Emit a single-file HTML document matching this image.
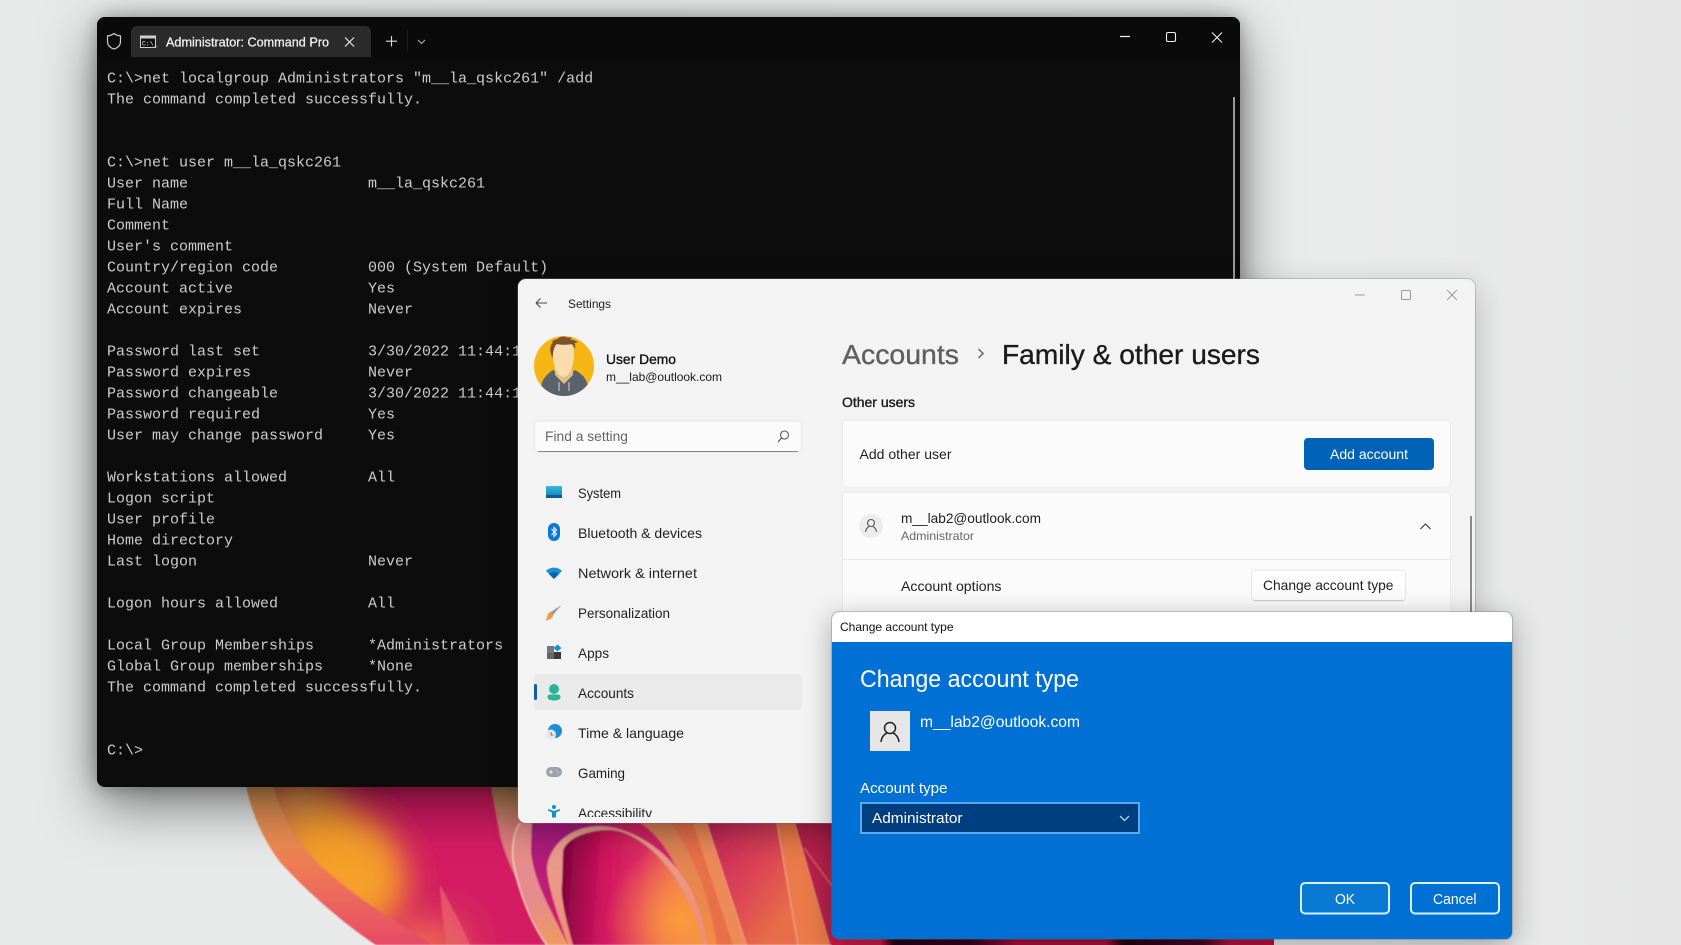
<!DOCTYPE html>
<html lang="en"><head><meta charset="utf-8"><title>Change account type</title>
<style>
html,body{margin:0;padding:0;width:1681px;height:945px;overflow:hidden;background:#e7e8e8}
.win{position:absolute;overflow:hidden}
.win>svg,#wall{position:absolute;display:block}
text{font-family:"Liberation Sans",Arial,sans-serif;white-space:pre}
.mono text,text.m{font-family:"Liberation Mono",monospace;font-size:15px;fill:#cccccc}
.sb{stroke-width:.35px}
</style></head><body>

<!-- desktop wallpaper -->
<svg id="wall" width="1681" height="945" viewBox="0 0 1681 945" style="left:0;top:0">
<defs>
<linearGradient id="bg" x1="0" y1="0" x2="1" y2="0"><stop offset="0" stop-color="#e8e9e9"/><stop offset=".8" stop-color="#eaebeb"/><stop offset="1" stop-color="#e6e6e6"/></linearGradient>
<filter id="soft" x="-5%" y="-5%" width="110%" height="110%"><feGaussianBlur stdDeviation=".7"/></filter>
<filter id="bl" x="-60%" y="-60%" width="220%" height="220%"><feGaussianBlur stdDeviation="18"/></filter>
<clipPath id="regB"><path d="M272 780 C280 815 302 852 330 874 C362 902 405 927 432 945 L560 945 L560 780Z"/></clipPath>
<linearGradient id="edge" x1="0" y1="0" x2="0" y2="1"><stop offset="0" stop-color="#d89a55"/><stop offset=".4" stop-color="#f08850"/><stop offset="1" stop-color="#e84a66"/></linearGradient>
<linearGradient id="band" x1="0" y1="0" x2="0" y2="1"><stop offset="0" stop-color="#b08a4e"/><stop offset=".35" stop-color="#e07a80"/><stop offset="1" stop-color="#e88a80"/></linearGradient>
<linearGradient id="band2" x1="0" y1="0" x2="0" y2="1"><stop offset="0" stop-color="#e89088"/><stop offset=".6" stop-color="#e58a90"/><stop offset="1" stop-color="#ee9a60"/></linearGradient>
<linearGradient id="mag" gradientUnits="userSpaceOnUse" x1="535" y1="830" x2="560" y2="940"><stop offset="0" stop-color="#a81a80"/><stop offset="1" stop-color="#d42068"/></linearGradient>
<linearGradient id="fold" gradientUnits="userSpaceOnUse" x1="563" y1="880" x2="703" y2="890"><stop offset="0" stop-color="#850340"/><stop offset=".3" stop-color="#d2155f"/><stop offset=".55" stop-color="#de2f64"/><stop offset=".8" stop-color="#ea6a58"/><stop offset="1" stop-color="#f08a50"/></linearGradient>
<radialGradient id="foldg" gradientUnits="userSpaceOnUse" cx="680" cy="920" r="75"><stop offset="0" stop-color="#fb9a3c" stop-opacity="1"/><stop offset="1" stop-color="#fb9a3c" stop-opacity="0"/></radialGradient>
<linearGradient id="ring" gradientUnits="userSpaceOnUse" x1="550" y1="830" x2="560" y2="945"><stop offset="0" stop-color="#e8a090"/><stop offset="1" stop-color="#ed8e7a"/></linearGradient>
<linearGradient id="outer" gradientUnits="userSpaceOnUse" x1="640" y1="823" x2="700" y2="945"><stop offset="0" stop-color="#d8805a"/><stop offset="1" stop-color="#f48a44"/></linearGradient>
<linearGradient id="cr" gradientUnits="userSpaceOnUse" x1="707" y1="830" x2="800" y2="900"><stop offset="0" stop-color="#c4265c"/><stop offset=".55" stop-color="#dc4455"/><stop offset="1" stop-color="#e86e48"/></linearGradient>
<linearGradient id="bot" x1="0" y1="0" x2="1" y2="0"><stop offset="0" stop-color="#c81c44"/><stop offset=".11" stop-color="#c81c44"/><stop offset=".14" stop-color="#260018"/><stop offset=".32" stop-color="#3a0420"/><stop offset=".42" stop-color="#a8103e"/><stop offset=".62" stop-color="#a8103e"/><stop offset=".66" stop-color="#24000f"/><stop offset=".84" stop-color="#4a0824"/><stop offset=".9" stop-color="#b5123f"/><stop offset="1" stop-color="#b5123f"/></linearGradient>
</defs>
<rect width="1681" height="945" fill="url(#bg)"/>
<g filter="url(#soft)">
<path d="M245 780 C250 810 262 838 280 862 C305 890 345 925 376 945 L560 945 L560 780Z" fill="url(#edge)"/>
<path d="M272 780 C280 815 302 852 330 874 C362 902 405 927 432 945 L560 945 L560 780Z" fill="#d41f62"/>
<g clip-path="url(#regB)">
<ellipse cx="300" cy="805" rx="42" ry="50" fill="#d98a48" filter="url(#bl)"/>
<ellipse cx="345" cy="868" rx="62" ry="48" transform="rotate(48 345 868)" fill="#f5a02a" filter="url(#bl)"/>
<ellipse cx="345" cy="868" rx="62" ry="48" transform="rotate(48 345 868)" fill="#f5a02a" filter="url(#bl)" opacity=".7"/>
<ellipse cx="425" cy="945" rx="40" ry="24" fill="#f07050" filter="url(#bl)"/>
</g>
<path d="M440 885 C450 905 462 925 470 945 L446 945 C444 925 441 905 440 885Z" fill="#e8606a" opacity=".8"/>
<path d="M490 780 L530 780 L530 835 L513 845 C515 880 535 925 547 945 C530 905 505 860 500 835Z" fill="url(#band)"/>
<path d="M530 785 L835 785 L835 945 L540 945 L530 860Z" fill="#d42068"/>
<path d="M513 845 C513 880 532 920 547 945 L568 945 C548 905 534 880 531 852 L532 823 L520 823Z" fill="url(#band2)"/>
<path d="M520 823 C513 832 512 850 513 860 C518 890 532 925 547 945" fill="none" stroke="#f6d4c6" stroke-width="1.300"/>
<path d="M532 823 L640 823 L600 826 C570 828 547 850 547 868 C548 890 560 920 568 945 C548 905 534 880 531 852Z" fill="url(#mag)"/>
<path d="M640 823 L707 823 L747 945 L700 945 C695 900 670 840 640 823Z" fill="url(#outer)"/>
<path d="M670 823 L693 823 L733 945 L717 945 C710 900 695 855 670 823Z" fill="#e8704a"/>
<path d="M693 823 L707 823 L747 945 L733 945Z" fill="#ee8a58"/>
<path d="M707 823 L747 945" stroke="#f6b090" stroke-width="1.100" fill="none"/>
<path d="M547 868 C549 846 570 826 600 826 C640 828 680 860 695 900 C702 915 705 930 707 945 L568 945 C560 920 548 890 547 868Z" fill="url(#ring)"/>
<path d="M563 852 C565 838 590 829 613 830 C640 834 665 860 680 885 C692 905 700 925 703 945 L573 945 C566 920 560 895 562 885Z" fill="url(#fold)"/>
<path d="M563 852 C565 838 590 829 613 830 C640 834 665 860 680 885 C692 905 700 925 703 945 L573 945 C566 920 560 895 562 885Z" fill="url(#foldg)"/>
<path d="M707 823 L777 823 L798 945 L747 945Z" fill="url(#cr)"/>
<path d="M777 823 L795 823 L830 945 L798 945Z" fill="#ea7a48"/>
<path d="M777 823 L798 945M795 823 L830 945" stroke="#f2a888" stroke-width="1" fill="none"/>
<path d="M795 823 L835 823 L835 945 L830 945Z" fill="#b8204e"/>
<path d="M804 848 L835 890" stroke="#e8705a" stroke-width="1" fill="none"/>
</g>
<rect x="832" y="930" width="442" height="15" fill="url(#bot)"/>
</svg>

<!-- Terminal window -->
<div class="win" style="left:97px;top:17px;width:1143px;height:770px;background:#0c0c0c;border-radius:8px;box-shadow:0 18px 55px rgba(0,0,0,.5),0 0 18px rgba(0,0,0,.3);overflow:visible">
<div style="position:absolute;inset:0;border-radius:8px;overflow:hidden;background:#0c0c0c">
<svg width="1681" height="945" viewBox="0 0 1681 945" style="position:absolute;left:-97px;top:-17px">
<rect x="97" y="17" width="1143" height="40" fill="#0a0a0a"/>
<path d="M114 33.500c2 1.600 4 2.200 6.500 2.400v5.600c0 3.700-2.400 6.200-6.500 7.600-4.100-1.400-6.500-3.900-6.500-7.600v-5.600c2.500-.2 4.500-.8 6.500-2.400z" fill="none" stroke="#c9c9c9" stroke-width="1.200"/>
<path d="M131 57v-25a6 6 0 0 1 6-6h228a6 6 0 0 1 6 6v25z" fill="#2b2b2b"/>
<rect x="140.500" y="36" width="15" height="11.500" fill="#111" stroke="#cfcfcf" stroke-width="1"/>
<rect x="141" y="36.500" width="14" height="2" fill="#cfcfcf"/>
<text x="142" y="45.500" font-size="6.500" fill="#eee" style="font-family:'Liberation Mono',monospace">C:\_</text>
<text x="166" y="46.500" font-size="12.500" fill="#f2f2f2" stroke="#f2f2f2" stroke-width=".25" textLength="163" lengthAdjust="spacingAndGlyphs">Administrator: Command Pro</text>
<path d="M345 37.500l9 9m0-9l-9 9" stroke="#e5e5e5" stroke-width="1.200"/>
<path d="M391.500 36v10.500M386 41.200h11" stroke="#dcdcdc" stroke-width="1.100"/>
<path d="M407.500 30v22" stroke="#1b1b1b"/>
<path d="M418 40l3.500 3.500 3.500-3.500" fill="none" stroke="#b5b5b5" stroke-width="1"/>
<path d="M1120 36.500h10" stroke="#f0f0f0" stroke-width="1.200"/>
<rect x="1166.500" y="32.500" width="9" height="9" rx="1.500" fill="none" stroke="#f0f0f0" stroke-width="1.100"/>
<path d="M1212 32.500l10 10m0-10l-10 10" stroke="#f0f0f0" stroke-width="1.100"/>
<rect x="1233" y="97" width="2" height="700" fill="#9a9a9a"/>
<g class="mono" transform="translate(0 -.5)">
<text x="107" y="83">C:\&gt;net localgroup Administrators "m__la_qskc261" /add</text>
<text x="107" y="104">The command completed successfully.</text>
<text x="107" y="167">C:\&gt;net user m__la_qskc261</text>
<text x="107" y="188">User name                    m__la_qskc261</text>
<text x="107" y="209">Full Name</text>
<text x="107" y="230">Comment</text>
<text x="107" y="251">User's comment</text>
<text x="107" y="272">Country/region code          000 (System Default)</text>
<text x="107" y="293">Account active               Yes</text>
<text x="107" y="314">Account expires              Never</text>
<text x="107" y="356">Password last set            3/30/2022 11:44:15 AM</text>
<text x="107" y="377">Password expires             Never</text>
<text x="107" y="398">Password changeable          3/30/2022 11:44:15 AM</text>
<text x="107" y="419">Password required            Yes</text>
<text x="107" y="440">User may change password     Yes</text>
<text x="107" y="482">Workstations allowed         All</text>
<text x="107" y="503">Logon script</text>
<text x="107" y="524">User profile</text>
<text x="107" y="545">Home directory</text>
<text x="107" y="566">Last logon                   Never</text>
<text x="107" y="608">Logon hours allowed          All</text>
<text x="107" y="650">Local Group Memberships      *Administrators</text>
<text x="107" y="671">Global Group memberships     *None</text>
<text x="107" y="692">The command completed successfully.</text>
<text x="107" y="755">C:\&gt;</text>
</g>
</svg>
</div>
</div>

<!-- Settings window -->
<div class="win" style="left:518px;top:279px;width:957px;height:544px;background:#f3f3f3;border-radius:8px;box-shadow:0 0 0 1px rgba(120,120,120,.35),0 8px 30px rgba(0,0,0,.22);overflow:visible">
<div style="position:absolute;inset:0;border-radius:8px;overflow:hidden;background:#f3f3f3">
<svg width="1681" height="945" viewBox="0 0 1681 945" style="position:absolute;left:-518px;top:-279px">
<defs>
<linearGradient id="sys" x1="0" y1="0" x2="0" y2="1"><stop offset="0" stop-color="#35bbe2"/><stop offset="1" stop-color="#0f7fb2"/></linearGradient>
<clipPath id="av"><circle cx="564" cy="366" r="30"/></clipPath>
</defs>
<path d="M536 303h11M536 303l4.500-4.500M536 303l4.500 4.500" fill="none" stroke="#444" stroke-width="1.100"/>
<text x="568" y="308" font-size="12" fill="#1f1f1f" textLength="43" lengthAdjust="spacingAndGlyphs">Settings</text>

<!-- avatar -->
<circle cx="564" cy="366" r="30" fill="#f6b715"/>
<g clip-path="url(#av)">
<path d="M540 400c0-14 2-20 6-24 3-3 5-5 7-6l11 8 11-8c2 1 5 3 8 6 4 4 6 10 6 24z" fill="#5a626c"/>
<path d="M555 370h18v5l-9 9-9-9z" fill="#e2bd86"/>
<path d="M553 352c0 16 5 25 10.500 25s10.500-9 10.500-25c0-7-4-9-10.500-9s-10.500 2-10.500 9z" fill="#fbdcae"/>
<path d="M552.500 358c-3-6-3-12 0-15-.5-2 2-4 4.500-3.500 2-3 7-3.500 10-2l5 0-2 2c3 0 6 1 8 3l-3.500.5c1 2 1 4 .5 6-1-2-2-4-3-5-5 1-11 1-15 0-3 2-4 8-4.500 14z" fill="#7b5030"/>
<path d="M559 382v9M569 382v9" stroke="#d8d8d8" stroke-width="1"/>
</g>
<text x="606" y="364" font-size="14" fill="#111" stroke="#111" class="sb" textLength="70" lengthAdjust="spacingAndGlyphs">User Demo</text>
<text x="606" y="381" font-size="12" fill="#1a1a1a" textLength="116" lengthAdjust="spacingAndGlyphs">m__lab@outlook.com</text>

<!-- search -->
<rect x="534.500" y="421" width="267" height="31" rx="4" fill="#fbfbfb" stroke="#e6e6e6"/>
<path d="M538 451.500h260" stroke="#868686"/>
<text x="545" y="441" font-size="14" fill="#666" textLength="83" lengthAdjust="spacingAndGlyphs">Find a setting</text>
<circle cx="784.500" cy="435" r="4" fill="none" stroke="#555" stroke-width="1.100"/>
<path d="M781.500 438l-3.500 4" stroke="#555" stroke-width="1.100"/>

<!-- nav -->
<rect x="534" y="674" width="268" height="36" rx="4" fill="#eaeaea"/>
<rect x="534" y="684" width="3" height="16" rx="1.500" fill="#0f5fa8"/>
<g font-size="14" fill="#1f1f1f">
<text x="578" y="498" textLength="43" lengthAdjust="spacingAndGlyphs">System</text>
<text x="578" y="538" textLength="124" lengthAdjust="spacingAndGlyphs">Bluetooth &amp; devices</text>
<text x="578" y="578" textLength="119" lengthAdjust="spacingAndGlyphs">Network &amp; internet</text>
<text x="578" y="618" textLength="92" lengthAdjust="spacingAndGlyphs">Personalization</text>
<text x="578" y="658" textLength="31" lengthAdjust="spacingAndGlyphs">Apps</text>
<text x="578" y="698" textLength="56" lengthAdjust="spacingAndGlyphs">Accounts</text>
<text x="578" y="738" textLength="106" lengthAdjust="spacingAndGlyphs">Time &amp; language</text>
<text x="578" y="778" textLength="47" lengthAdjust="spacingAndGlyphs">Gaming</text>
<text x="578" y="818" textLength="74" lengthAdjust="spacingAndGlyphs">Accessibility</text>
</g>
<rect x="570" y="817" width="100" height="8" fill="#f3f3f3"/>
<!-- nav icons -->
<rect x="546" y="486" width="16" height="12" rx="1" fill="url(#sys)"/><rect x="546" y="495" width="16" height="3" fill="#0b5f88"/>
<rect x="548" y="523" width="12" height="18" rx="6" fill="#0d78d8"/><path d="M551.500 529l5 5-2.500 2.500v-9l2.500 2.500-5 5" fill="none" stroke="#fff" stroke-width="1"/>
<path d="M546 571c4-4.500 12-4.500 16 0l-8 8z" fill="#1a8fd8"/><path d="M549 574c3-2.500 7-2.500 10 0l-5 5z" fill="#0a62b0"/>
<path d="M561.500 605l-8.500 10-3-2.500z" fill="#9b9b9b"/><path d="M553.500 615l-3.500-3c-3 1.500-2 5-4.500 8.500 3.500-.5 7-2 8-5.500z" fill="#f09a3a"/>
<rect x="547" y="646" width="7" height="7" fill="#777"/><rect x="547" y="653" width="7" height="6" fill="#666"/><rect x="554" y="652" width="7" height="7" fill="#3a3a3a"/><path d="M557.500 644.500l4 3.500-4 3.500-4-3.500z" fill="#1693d6"/>
<circle cx="554" cy="689" r="5" fill="#2bb39a"/><path d="M547.500 697c0-2 1.500-2.500 3-2.500h7c1.500 0 3 .5 3 2.500 0 2.500-3 3.500-6.500 3.500s-6.500-1-6.500-3.500z" fill="#2bb39a"/>
<circle cx="555" cy="731" r="7" fill="#1b8fd8"/><circle cx="551" cy="734.500" r="5" fill="#e6e8ec"/><path d="M551 732v3h2.500" fill="none" stroke="#555" stroke-width=".8"/>
<rect x="546" y="767" width="16" height="10" rx="5" fill="#9ba1ad"/><path d="M549 772h4M551 770v4M556 771h1M558 773h1" stroke="#fff" stroke-width=".8"/>
<circle cx="554" cy="807" r="2" fill="#1090d0"/><path d="M548 809l6 2 6-2v1.500l-4 2v5h-4v-5l-4-2z" fill="#1090d0"/>
<rect x="545" y="819" width="20" height="6" fill="#f3f3f3"/>

<!-- window controls -->
<path d="M1355 295h9.500" stroke="#9a9a9a" stroke-width="1"/>
<rect x="1401.500" y="290.500" width="9" height="9" rx="1" fill="none" stroke="#9a9a9a"/>
<path d="M1447 290l10 10m0-10l-10 10" stroke="#9a9a9a"/>

<!-- heading -->
<text x="842" y="364" font-size="28" fill="#5f5f5f" stroke="#5f5f5f" class="sb" textLength="117" lengthAdjust="spacingAndGlyphs">Accounts</text>
<path d="M978.500 349l4.500 4.500-4.500 4.500" fill="none" stroke="#666" stroke-width="1.500"/>
<text x="1002" y="364" font-size="28" fill="#1a1a1a" stroke="#1a1a1a" class="sb" textLength="258" lengthAdjust="spacingAndGlyphs">Family &amp; other users</text>
<text x="842" y="407" font-size="14" fill="#1a1a1a" stroke="#1a1a1a" class="sb" textLength="73" lengthAdjust="spacingAndGlyphs">Other users</text>

<!-- cards -->
<rect x="842.500" y="420" width="608" height="67" rx="4" fill="#fbfbfb" stroke="#ebebeb"/>
<text x="859.500" y="459" font-size="14" fill="#1f1f1f" textLength="92" lengthAdjust="spacingAndGlyphs">Add other user</text>
<rect x="1304" y="438" width="130" height="32" rx="4" fill="#0063b8"/>
<text x="1330" y="459" font-size="14" fill="#fff" textLength="78" lengthAdjust="spacingAndGlyphs">Add account</text>
<rect x="842.500" y="492" width="608" height="200" rx="4" fill="#fbfbfb" stroke="#ebebeb"/>
<path d="M843 559.500h607" stroke="#e8e8e8"/>
<circle cx="871" cy="526" r="12" fill="#ececec"/>
<circle cx="871" cy="523" r="3.500" fill="none" stroke="#555" stroke-width="1.100"/>
<path d="M865.500 532c.5-3.500 2.500-5 3.500-5.500M876.500 532c-.5-3.500-2.500-5-3.500-5.500" fill="none" stroke="#555" stroke-width="1.100"/>
<text x="901" y="523" font-size="14" fill="#1f1f1f" textLength="140" lengthAdjust="spacingAndGlyphs">m__lab2@outlook.com</text>
<text x="901" y="540" font-size="12" fill="#666" textLength="73" lengthAdjust="spacingAndGlyphs">Administrator</text>
<path d="M1420.500 529l5-5 5 5" fill="none" stroke="#333" stroke-width="1.100"/>
<text x="901" y="591" font-size="14" fill="#1f1f1f" textLength="100.500" lengthAdjust="spacingAndGlyphs">Account options</text>
<rect x="1251.500" y="570" width="154" height="31" rx="4" fill="#fdfdfd" stroke="#e5e5e5"/>
<path d="M1254 600.500h149" stroke="#cfcfcf"/>
<text x="1263" y="590" font-size="14" fill="#1f1f1f" textLength="130.500" lengthAdjust="spacingAndGlyphs">Change account type</text>
<rect x="1470" y="516" width="2" height="120" fill="#8a8a8a"/>
</svg>
</div>
</div>

<!-- Change account type dialog -->
<div class="win" style="left:832px;top:612px;width:680px;height:327px;background:#0070d4;border-radius:7px;box-shadow:0 0 0 1px rgba(110,110,110,.35),0 6px 28px rgba(0,0,0,.32);overflow:visible">
<div style="position:absolute;inset:0;border-radius:7px;overflow:hidden;background:#0070d4">
<svg width="1681" height="945" viewBox="0 0 1681 945" style="position:absolute;left:-832px;top:-612px">
<rect x="832" y="612" width="680" height="30" fill="#fff"/>
<text x="840" y="631" font-size="12" fill="#111" textLength="113.500" lengthAdjust="spacingAndGlyphs">Change account type</text>
<text x="860" y="687" font-size="24" fill="#fff" textLength="219" lengthAdjust="spacingAndGlyphs">Change account type</text>
<rect x="870" y="711" width="40" height="40" fill="#e6e6e6"/>
<circle cx="890" cy="728" r="5.500" fill="none" stroke="#222" stroke-width="1.500"/>
<path d="M881 742c.5-5 3.500-8 6-9M899 742c-.5-5-3.500-8-6-9" fill="none" stroke="#222" stroke-width="1.500"/>
<text x="920" y="727" font-size="16" fill="#fff" textLength="160" lengthAdjust="spacingAndGlyphs">m__lab2@outlook.com</text>
<text x="860" y="793" font-size="15" fill="#fff" textLength="87.500" lengthAdjust="spacingAndGlyphs">Account type</text>
<rect x="861" y="803" width="278" height="30" fill="#003f7f" stroke="#5aa8ee" stroke-width="2"/>
<text x="872" y="823" font-size="15" fill="#fff" textLength="90.500" lengthAdjust="spacingAndGlyphs">Administrator</text>
<path d="M1120 816l4.500 4.500 4.500-4.500" fill="none" stroke="#d0e4f5" stroke-width="1.200"/>
<rect x="1301" y="883" width="88" height="30.500" rx="4" fill="#087ad4" stroke="#d4f2ff" stroke-width="2"/>
<text x="1335" y="904" font-size="15" fill="#fff" textLength="20" lengthAdjust="spacingAndGlyphs">OK</text>
<rect x="1411" y="883" width="88" height="30.500" rx="4" fill="#0070d4" stroke="#d4f2ff" stroke-width="2"/>
<text x="1433" y="904" font-size="15" fill="#fff" textLength="43.500" lengthAdjust="spacingAndGlyphs">Cancel</text>
</svg>
</div>
</div>
</body></html>
